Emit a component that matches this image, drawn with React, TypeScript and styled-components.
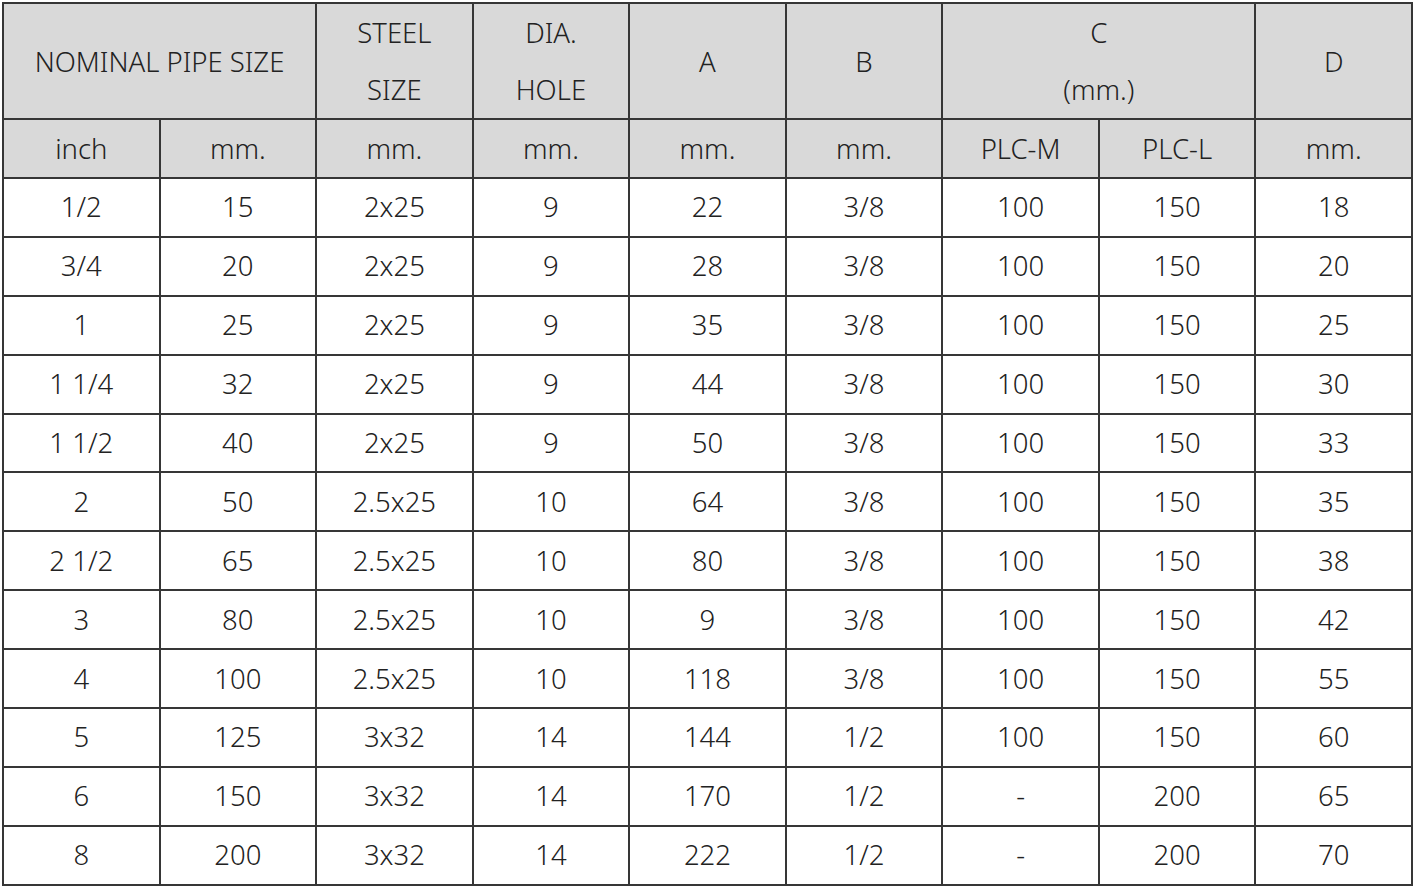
import styled, { createGlobalStyle } from "styled-components";

const GlobalStyle = createGlobalStyle`
  body {
    margin: 0;
    padding: 2px;
    background: #ffffff;
    font-family: "Noto Sans", "Open Sans", sans-serif;
  }
`;

const Table = styled.table`
  width: 1411px;
  border-collapse: collapse;
  table-layout: fixed;
  color: #222222;
  font-size: 27.5px;
  font-weight: 300;
`;

const HeadCell = styled.th<{ $tall?: boolean }>`
  background: #d9d9d9;
  border: 2px solid #363636;
  font-weight: 300;
  text-align: center;
  padding: 0;
  height: ${(p) => (p.$tall ? "114px" : "56.8px")};
  line-height: 57px;
`;

const Cell = styled.td`
  border: 2px solid #363636;
  text-align: center;
  padding: 0;
  height: 56.9px;
  line-height: 30px;
`;

const rows: string[][] = [
  ["1/2", "15", "2x25", "9", "22", "3/8", "100", "150", "18"],
  ["3/4", "20", "2x25", "9", "28", "3/8", "100", "150", "20"],
  ["1", "25", "2x25", "9", "35", "3/8", "100", "150", "25"],
  ["1 1/4", "32", "2x25", "9", "44", "3/8", "100", "150", "30"],
  ["1 1/2", "40", "2x25", "9", "50", "3/8", "100", "150", "33"],
  ["2", "50", "2.5x25", "10", "64", "3/8", "100", "150", "35"],
  ["2 1/2", "65", "2.5x25", "10", "80", "3/8", "100", "150", "38"],
  ["3", "80", "2.5x25", "10", "9", "3/8", "100", "150", "42"],
  ["4", "100", "2.5x25", "10", "118", "3/8", "100", "150", "55"],
  ["5", "125", "3x32", "14", "144", "1/2", "100", "150", "60"],
  ["6", "150", "3x32", "14", "170", "1/2", "-", "200", "65"],
  ["8", "200", "3x32", "14", "222", "1/2", "-", "200", "70"],
];

const App = () => {
  return (
    <>
      <GlobalStyle />
      <Table>
        <thead>
          <tr>
            <HeadCell $tall colSpan={2}>NOMINAL PIPE SIZE</HeadCell>
            <HeadCell $tall>STEEL<br />SIZE</HeadCell>
            <HeadCell $tall>DIA.<br />HOLE</HeadCell>
            <HeadCell $tall>A</HeadCell>
            <HeadCell $tall>B</HeadCell>
            <HeadCell $tall colSpan={2}>C<br />(mm.)</HeadCell>
            <HeadCell $tall>D</HeadCell>
          </tr>
          <tr>
            <HeadCell>inch</HeadCell>
            <HeadCell>mm.</HeadCell>
            <HeadCell>mm.</HeadCell>
            <HeadCell>mm.</HeadCell>
            <HeadCell>mm.</HeadCell>
            <HeadCell>mm.</HeadCell>
            <HeadCell>PLC-M</HeadCell>
            <HeadCell>PLC-L</HeadCell>
            <HeadCell>mm.</HeadCell>
          </tr>
        </thead>
        <tbody>
          {rows.map((row, i) => (
            <tr key={i}>
              {row.map((value, j) => (
                <Cell key={j}>{value}</Cell>
              ))}
            </tr>
          ))}
        </tbody>
      </Table>
    </>
  );
};

export default App;
